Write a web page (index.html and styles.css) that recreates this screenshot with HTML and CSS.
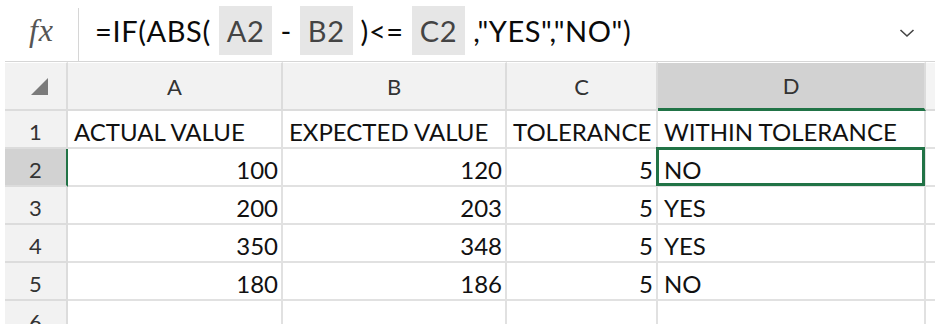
FILE: index.html
```html
<!DOCTYPE html>
<html lang="en">
<head>
    <meta charset="UTF-8">
    <title>Within Tolerance</title>
    <link rel="stylesheet" href="styles.css">
</head>
<body>
    <div class="formula-bar">
        <div class="fx-box"><span class="fx">fx</span></div>
        <div class="formula">=IF(ABS(<span class="ref">A2</span>-<span class="ref">B2</span>)&lt;=<span class="ref">C2</span>,"YES","NO")</div>
        <div class="expand">
            <svg width="16" height="10" viewBox="0 0 16 10"><path d="M1.5 2 L8 8 L14.5 2" fill="none" stroke="#444" stroke-width="1.6"/></svg>
        </div>
    </div>

    <div class="sheet">
        <div class="col-head corner"><span class="tri"></span></div>
        <div class="col-head">A</div>
        <div class="col-head">B</div>
        <div class="col-head">C</div>
        <div class="col-head active">D</div>
        <div class="col-head rest"></div>

        <div class="row-head">1</div>
        <div class="cell">ACTUAL VALUE</div>
        <div class="cell">EXPECTED VALUE</div>
        <div class="cell">TOLERANCE</div>
        <div class="cell">WITHIN TOLERANCE</div>
        <div class="cell rest"></div>

        <div class="row-head active">2</div>
        <div class="cell num">100</div>
        <div class="cell num">120</div>
        <div class="cell num">5</div>
        <div class="cell selected">NO</div>
        <div class="cell rest"></div>

        <div class="row-head">3</div>
        <div class="cell num">200</div>
        <div class="cell num">203</div>
        <div class="cell num">5</div>
        <div class="cell">YES</div>
        <div class="cell rest"></div>

        <div class="row-head">4</div>
        <div class="cell num">350</div>
        <div class="cell num">348</div>
        <div class="cell num">5</div>
        <div class="cell">YES</div>
        <div class="cell rest"></div>

        <div class="row-head">5</div>
        <div class="cell num">180</div>
        <div class="cell num">186</div>
        <div class="cell num">5</div>
        <div class="cell">NO</div>
        <div class="cell rest"></div>

        <div class="row-head">6</div>
        <div class="cell"></div>
        <div class="cell"></div>
        <div class="cell"></div>
        <div class="cell"></div>
        <div class="cell rest"></div>
    </div>
</body>
</html>
```

FILE: styles.css
```css
body {
    margin: 0;
    padding-left: 5px;
    background: #ffffff;
    font-family: 'Lato', 'Liberation Sans', sans-serif;
    color: #111111;
    overflow: hidden;
    height: 324px;
}

/* Formula bar */
.formula-bar {
    display: flex;
    align-items: stretch;
    height: 62px;
    border-bottom: 1px solid #d6d6d6;
    box-sizing: border-box;
}

.fx-box {
    width: 74px;
    display: flex;
    align-items: center;
    justify-content: center;
    box-sizing: border-box;
    border-right: 1px solid #d6d6d6;
    margin-top: 8px;
    padding-bottom: 8px;
}

.fx {
    font-family: 'Liberation Serif', serif;
    font-style: italic;
    font-size: 32px;
    color: #555555;
    letter-spacing: 1px;
}

.formula {
    flex: 1;
    display: flex;
    align-items: center;
    padding-left: 16px;
    font-size: 29px;
    letter-spacing: 0.6px;
    color: #0a0a0a;
    white-space: pre;
}

.ref {
    background: #e6e6e6;
    color: #444444;
    padding: 7px 8px;
    margin: 0 8px;
}

.expand {
    width: 56px;
    display: flex;
    align-items: center;
    justify-content: center;
    padding-top: 4px;
}

/* Grid */
.sheet {
    display: grid;
    grid-template-columns: 63px 215px 224px 151px 268px 1fr;
    grid-template-rows: 49px repeat(5, 38px) 38px;
    font-size: 24px;
}

.col-head {
    background: #f2f2f2;
    border-right: 2px solid #dcdcdc;
    border-top: 1px solid #ffffff;
    border-bottom: 2px solid #dcdcdc;
    display: flex;
    align-items: center;
    justify-content: center;
    color: #333333;
    font-size: 22px;
    box-sizing: border-box;
}

.col-head.active {
    background: #d2d2d2;
    border-bottom: 3px solid #217346;
}

.col-head.rest {
    border-right: none;
    background: #f4f4f4;
}

.tri {
    width: 0;
    height: 0;
    border-left: 17px solid transparent;
    border-bottom: 17px solid #7b7b7b;
    margin-left: 8px;
}

.row-head {
    background: #f2f2f2;
    border-right: 2px solid #dcdcdc;
    border-bottom: 2px solid #dcdcdc;
    display: flex;
    align-items: center;
    justify-content: center;
    padding-top: 4px;
    color: #333333;
    font-size: 22px;
    box-sizing: border-box;
}

.row-head.active {
    background: #d2d2d2;
    border-right: 2px solid #217346;
}

.cell {
    border-right: 2px solid #e1e1e1;
    border-bottom: 2px solid #e1e1e1;
    display: flex;
    align-items: center;
    padding: 5px 3px 0 6px;
    white-space: nowrap;
    overflow: hidden;
    box-sizing: border-box;
}

.cell.num {
    justify-content: flex-end;
}

.cell.rest {
    border-right: none;
}

.cell.selected {
    position: relative;
    overflow: visible;
}

.cell.selected::after {
    content: "";
    position: absolute;
    left: -2px;
    top: -2px;
    right: -1px;
    bottom: -1px;
    border: 3px solid #217346;
}
```
